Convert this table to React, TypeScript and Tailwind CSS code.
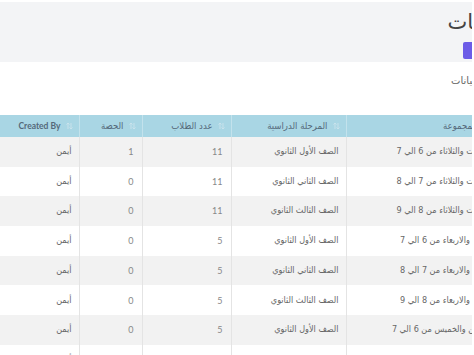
import React from 'react';

const rows = [
  ['السبت والثلاثاء من 6 الي 7', 'الصف الأول الثانوي', '11', '1', 'أيمن'],
  ['السبت والثلاثاء من 7 الي 8', 'الصف الثاني الثانوي', '11', '0', 'أيمن'],
  ['السبت والثلاثاء من 8 الي 9', 'الصف الثالث الثانوي', '11', '0', 'أيمن'],
  ['الأحد والاربعاء من 6 الي 7', 'الصف الأول الثانوي', '5', '0', 'أيمن'],
  ['الأحد والاربعاء من 7 الي 8', 'الصف الثاني الثانوي', '5', '0', 'أيمن'],
  ['الأحد والاربعاء من 8 الي 9', 'الصف الثالث الثانوي', '5', '0', 'أيمن'],
  ['الاثنين والخميس من 6 الي 7', 'الصف الأول الثانوي', '5', '0', 'أيمن'],
  ['الاثنين والخميس من 7 الي 8', 'الصف الثاني الثانوي', '5', '0', 'أيمن'],
];

const headers = ['#', 'المجموعة', 'المرحلة الدراسية', 'عدد الطلاب', 'الحصة', 'Created By'];
const widths = ['w-[79px]', 'w-[150px]', 'w-[115px]', 'w-[89px]', 'w-[63px]', 'w-[79px]'];

function SortIcon() {
  return (
    <svg width="7" height="8" viewBox="0 0 7 8" className="shrink-0">
      <path d="M2 7V1M0.5 2.5L2 1l1.5 1.5" stroke="#cbe3ec" strokeWidth="0.9" fill="none" />
      <path d="M5 1v6M3.5 5.5L5 7l1.5-1.5" stroke="#cbe3ec" strokeWidth="0.9" fill="none" />
    </svg>
  );
}

export default function App() {
  return (
    <div className="w-[472px] h-[355px] overflow-hidden bg-white">
      <div dir="rtl" className="w-[575px] pt-[2px] font-['DejaVu_Sans_Condensed','DejaVu_Sans',sans-serif]">
        <div className="bg-[#f3f4f6] h-[60px] pt-[6px] font-['DejaVu_Sans',sans-serif]">
          <h1 className="pr-[28px] text-[21px] leading-[28px] text-[#444]">المجموعات</h1>
          <div className="pr-[18px]">
            <button className="mt-[1px] h-[17px] px-[19px] bg-[#6c5ce7] text-white text-[9px] leading-[17px] rounded-[2px]">
              إضافة مجموعة
            </button>
          </div>
        </div>
        <p className="mt-[12px] pr-[67px] text-[10px] leading-[14px] text-[#666] font-['DejaVu_Sans',sans-serif]">
          عرض البيانات
        </p>
        <table className="mt-[27px] table-fixed border-collapse w-[575px]">
          <thead>
            <tr className="bg-[#a9d6e4] h-[22px]">
              {headers.map((h, i) => (
                <th
                  key={h}
                  className={`${widths[i]} px-[6px] text-right font-normal border-l border-[#c3e2ec] last:border-l-0`}
                >
                  <div className="flex items-center gap-[5px]">
                    <SortIcon />
                    <span
                      className={
                        i === 5
                          ? "text-[8.5px] font-bold text-[#55697a] font-['Lato',sans-serif]"
                          : 'text-[9.5px] text-[#55697a]'
                      }
                    >
                      {h}
                    </span>
                  </div>
                </th>
              ))}
            </tr>
          </thead>
          <tbody>
            {rows.map((r, ri) => (
              <tr key={ri} className={ri % 2 === 0 ? 'bg-[#f2f2f2] h-[29.7px]' : 'bg-white h-[29.7px]'}>
                <td className="border-l border-[#e4e4e4] text-[9px] text-[#777] pr-[7px]">{ri + 1}</td>
                {r.map((c, ci) => (
                  <td
                    key={ci}
                    className={
                      ci === 2 || ci === 3
                        ? "pr-[8px] text-right text-[9px] text-[#888] font-['Lato',sans-serif] border-l border-[#e4e4e4]"
                        : 'pr-[7px] text-right text-[9px] text-[#666] whitespace-nowrap border-l border-[#e4e4e4] last:border-l-0'
                    }
                  >
                    {c}
                  </td>
                ))}
              </tr>
            ))}
          </tbody>
        </table>
      </div>
    </div>
  );
}
